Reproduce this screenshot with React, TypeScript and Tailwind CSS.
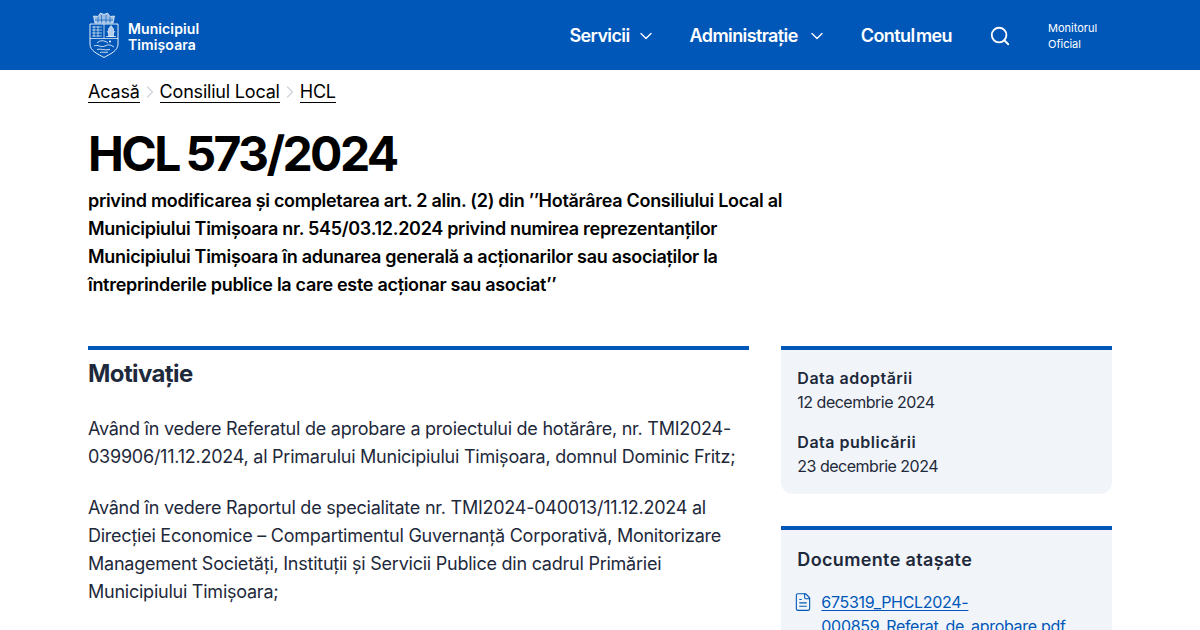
import { ChevronDown, ChevronRight, FileText, Search } from "lucide-react";

const Crest = () => (
  <svg width="30" height="46" viewBox="0 0 30 46" fill="none" stroke="#fff" className="ml-px shrink-0">
    {/* mural crown */}
    <path d="M6 11 L4.5 4 L9 4.5 L11.5 1 L15 2.5 L18.5 1 L21 4.5 L25.5 4 L24 11 Z" fill="#fff" fillOpacity="0.6" strokeWidth="0.7" />
    <path d="M6 8 H24 M9 4.5 V11 M12.5 3 V11 M17 3 V11 M21 4.5 V11" strokeWidth="0.6" stroke="#0057b8" />
    {/* shield */}
    <path d="M1 12 H29 V32 C29 39 21 42 15 45.5 C9 42 1 39 1 32 Z" strokeWidth="0.9" />
    <path d="M1 26.5 H29 M15 12 V26.5" strokeWidth="0.7" />
    {/* left quarter: wall */}
    <path d="M3 15 H13 M3 18 H13 M3 21 H13 M3 24 H13 M5 14 V25 M9 14 V25" strokeWidth="0.8" strokeOpacity="0.8" />
    {/* right quarter: tower */}
    <path d="M22 13.5 L24.5 17 V24.5 H19.5 V17 Z" fill="#fff" fillOpacity="0.7" strokeWidth="0.6" />
    <path d="M17 24.5 H27 M18 19 L19.5 21 M26 19 L24.5 21" strokeWidth="0.7" />
    {/* bottom: water */}
    <path d="M8 31 C11 28 15 28 19 31 M5 34 C9 32 12 36 16 34 S22 33 25 35 M8 37.5 C11 36 15 39 21 37.5 M11 40.5 C13 39.5 16 41 19 40" strokeWidth="0.8" />
    <circle cx="21" cy="29.5" r="1" fill="#fff" stroke="none" />
  </svg>
);

const Crumb = ({ label }: { label: string }) => (
  <a className="border-b border-black pt-px leading-[20px] tracking-[-0.2px]">{label}</a>
);

const navText = "text-lg font-semibold tracking-[-0.6px] [word-spacing:-2.5px]";

export default function App() {
  return (
    <div className="h-[630px] overflow-hidden bg-white font-['Inter',sans-serif] text-[#1e293b]">
      <header className="h-[70px] bg-[#0057b8] text-white">
        <div className="mx-auto flex h-full w-[1024px] items-center justify-between">
          <div className="flex items-center gap-[9px]">
            <Crest />
            <div className="pt-[4px] text-sm leading-4 font-semibold tracking-[0.1px]">
              Municipiul
              <br />
              Timișoara
            </div>
          </div>
          <nav className="flex items-center pt-[2px]">
            <a className={`flex items-center ${navText}`}>
              Servicii
              <ChevronDown className="ml-[6px] h-5 w-5" strokeWidth={1.6} />
            </a>
            <a className={`ml-[34px] flex items-center ${navText}`}>
              Administrație
              <ChevronDown className="ml-[9px] h-5 w-5" strokeWidth={1.6} />
            </a>
            <a className={`ml-[34px] ${navText}`}>Contul meu</a>
            <Search className="ml-[37px] h-[22px] w-[22px]" strokeWidth={2} />
            <div className="mr-[16px] ml-[37px] w-[48px] text-[11px] leading-4">
              Monitorul
              <br />
              Oficial
            </div>
          </nav>
        </div>
      </header>

      <main className="mx-auto w-[1024px]">
        <nav className="flex h-[44px] items-center text-lg text-black">
          <Crumb label="Acasă" />
          <ChevronRight className="h-5 w-5 text-gray-300" strokeWidth={1.6} />
          <Crumb label="Consiliul Local" />
          <ChevronRight className="h-5 w-5 text-gray-300" strokeWidth={1.6} />
          <Crumb label="HCL" />
        </nav>

        <h1 className="mt-[12px] text-5xl leading-[56px] font-bold tracking-[-2.6px] text-black [word-spacing:-2px]">
          HCL 573/2024
        </h1>
        <p className="mt-[5px] w-[710px] text-lg leading-7 font-semibold tracking-[-0.3px] text-black">
          privind modificarea și completarea art. 2 alin. (2) din ’’Hotărârea Consiliului Local al Municipiului Timișoara nr. 545/03.12.2024 privind numirea reprezentanților Municipiului Timișoara în adunarea generală a acționarilor sau asociaților la întreprinderile publice la care este acționar sau asociat’’
        </p>

        <div className="mt-[47px] grid grid-cols-[2fr_1fr] gap-8">
          <section className="border-t-4 border-[#0057b8]">
            <h2 className="mt-[8px] text-2xl leading-8 font-bold tracking-[-0.6px]">Motivație</h2>
            <p className="mt-[25px] text-lg leading-7 tracking-[-0.24px]">
              Având în vedere Referatul de aprobare a proiectului de hotărâre, nr. TMI2024-039906/11.12.2024, al Primarului Municipiului Timișoara, domnul Dominic Fritz;
            </p>
            <p className="mt-[23px] text-lg leading-7 tracking-[-0.24px]">
              Având în vedere Raportul de specialitate nr. TMI2024-040013/11.12.2024 al Direcției Economice – Compartimentul Guvernanță Corporativă, Monitorizare Management Societăți, Instituții și Servicii Publice din cadrul Primăriei Municipiului Timișoara;
            </p>
          </section>

          <aside>
            <div className="rounded-b-xl border-t-4 border-[#0057b8] bg-[#f1f5f9] p-4">
              <dl className="leading-6">
                <dt className="font-semibold tracking-[0.5px]">Data adoptării</dt>
                <dd className="mb-4 tracking-[-0.5px]">12 decembrie 2024</dd>
                <dt className="font-semibold tracking-[0.5px]">Data publicării</dt>
                <dd className="tracking-[-0.5px]">23 decembrie 2024</dd>
              </dl>
            </div>
            <div className="mt-8 rounded-b-xl border-t-4 border-[#0057b8] bg-[#f1f5f9] p-4">
              <h3 className="text-lg leading-7 font-semibold tracking-[0.35px]">Documente atașate</h3>
              <div className="mt-4 flex">
                <FileText className="mt-[2px] -ml-[4px] h-5 w-5 shrink-0 text-[#0057b8]" strokeWidth={1.3} />
                <a className="ml-2 leading-6 tracking-[-0.3px] text-[#0057b8] underline underline-offset-2">
                  675319_PHCL2024-
                  <br />
                  000859_Referat_de_aprobare.pdf
                </a>
              </div>
            </div>
          </aside>
        </div>
      </main>
    </div>
  );
}
